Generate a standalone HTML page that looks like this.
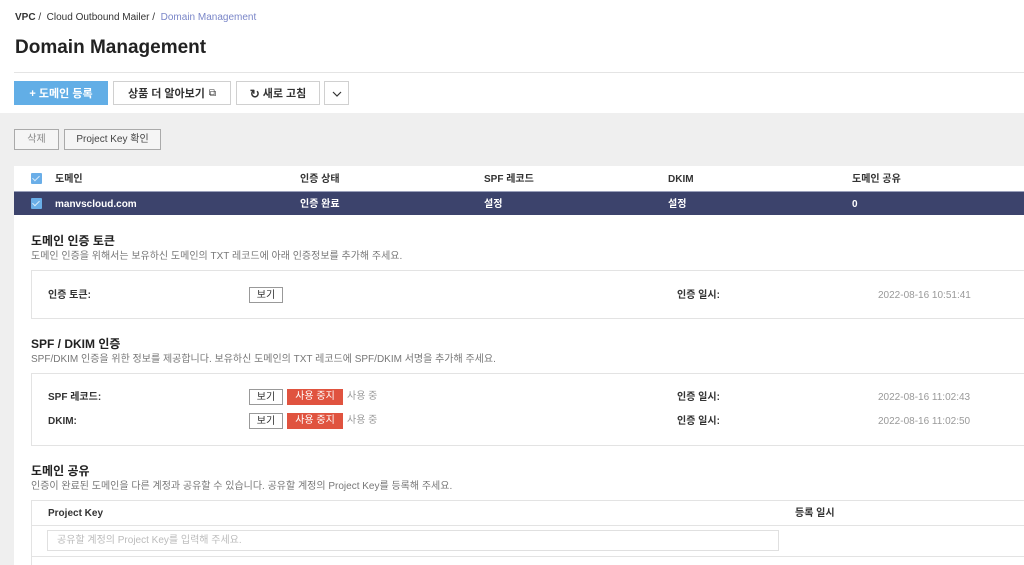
<!DOCTYPE html>
<html><head><meta charset="utf-8"><style>
*{box-sizing:border-box;margin:0;padding:0}
html,body{width:1024px;height:565px;overflow:hidden}
body{position:relative;background:#fff;font-family:"Liberation Sans","Noto Sans CJK KR",sans-serif;color:#222}
.a{position:absolute;white-space:nowrap;line-height:14px;margin-top:1px}
.btn{position:absolute;border:1px solid #d0d0d0;background:#fff;font-size:11px;font-weight:bold;color:#333;display:flex;align-items:center;justify-content:center;line-height:14px;padding-top:1px}
.sb,.rb{position:absolute;font-size:10px;height:16px;line-height:16px;text-align:center}
.sb{border:1px solid #999;background:#fff;color:#333;width:34px;line-height:15px}
.rb{background:#e0533f;color:#fff;width:56px}
.cb{position:absolute;width:11px;height:11px;background:#6aaee8;border-radius:1px}
.cb:after{content:"";position:absolute;left:3px;top:1px;width:3px;height:6px;border:solid #d6eafa;border-width:0 1px 1px 0;transform:rotate(45deg)}
.box{position:absolute;border:1px solid #e3e3e3;background:#fff}
.h{font-size:12px;font-weight:bold;color:#222}
.d{font-size:10px;color:#777}
.l{font-size:10px;font-weight:bold;color:#333}
.g{font-size:10px;color:#999}
</style></head><body>
<div class="a" style="left:15px;top:10px;font-size:10px;color:#333"><b>VPC</b> / &nbsp;Cloud Outbound Mailer / &nbsp;<span style="color:#7a86c8">Domain Management</span></div>
<div class="a" style="left:15px;top:36px;font-size:19px;line-height:22px;font-weight:bold;color:#222">Domain Management</div>
<div class="a" style="left:14px;top:71px;width:1010px;height:1px;background:#e4e4e4"></div>
<div class="btn" style="left:14px;top:81px;width:94px;height:24px;background:#62aee6;border-color:#62aee6;color:#fff">+ 도메인 등록</div>
<div class="btn" style="left:113px;top:81px;width:118px;height:24px">상품 더 알아보기 <span style="font-weight:normal;font-size:10px;margin-left:4px">⧉</span></div>
<div class="btn" style="left:236px;top:81px;width:84px;height:24px"><span style="font-size:12px;margin-right:3px">↻</span>새로 고침</div>
<div class="btn" style="left:324px;top:81px;width:25px;height:24px"><svg width="10" height="6"><path d="M1 1l4 4 4-4" fill="none" stroke="#333" stroke-width="1.2"/></svg></div>
<div class="a" style="left:0;top:113px;width:1024px;height:452px;background:#efefef;margin:0"></div>
<div class="btn" style="left:14px;top:129px;width:45px;height:21px;font-weight:normal;color:#888;background:#f5f5f5;border-color:#aaa;font-size:10px">삭제</div>
<div class="btn" style="left:64px;top:129px;width:97px;height:21px;font-weight:normal;color:#444;background:#f5f5f5;border-color:#aaa;font-size:10px">Project Key 확인</div>
<div class="a" style="left:14px;top:166px;width:1010px;height:399px;background:#fff;margin:0"></div>
<div class="cb" style="left:31px;top:173px"></div>
<div class="a l" style="left:55px;top:172px">도메인</div>
<div class="a l" style="left:300px;top:172px">인증 상태</div>
<div class="a l" style="left:484px;top:172px">SPF 레코드</div>
<div class="a l" style="left:668px;top:172px">DKIM</div>
<div class="a l" style="left:852px;top:172px">도메인 공유</div>
<div class="a" style="left:14px;top:191px;width:1010px;height:24px;background:#3c436c;border-top:1px solid #9aa0bb;margin:0"></div>
<div class="cb" style="left:31px;top:198px"></div>
<div class="a l" style="left:55px;top:197px;color:#fff">manvscloud.com</div>
<div class="a l" style="left:300px;top:197px;color:#fff">인증 완료</div>
<div class="a l" style="left:484px;top:197px;color:#fff">설정</div>
<div class="a l" style="left:668px;top:197px;color:#fff">설정</div>
<div class="a l" style="left:852px;top:197px;color:#fff">0</div>

<div class="a h" style="left:31px;top:233px">도메인 인증 토큰</div>
<div class="a d" style="left:31px;top:249px">도메인 인증을 위해서는 보유하신 도메인의 TXT 레코드에 아래 인증정보를 추가해 주세요.</div>
<div class="box" style="left:31px;top:270px;width:1000px;height:49px"></div>
<div class="a l" style="left:48px;top:288px">인증 토큰:</div>
<div class="sb" style="left:249px;top:287px">보기</div>
<div class="a l" style="left:677px;top:288px">인증 일시:</div>
<div class="a g" style="left:878px;top:288px">2022-08-16 10:51:41</div>

<div class="a h" style="left:31px;top:336px">SPF / DKIM 인증</div>
<div class="a d" style="left:31px;top:352px">SPF/DKIM 인증을 위한 정보를 제공합니다. 보유하신 도메인의 TXT 레코드에 SPF/DKIM 서명을 추가해 주세요.</div>
<div class="box" style="left:31px;top:373px;width:1000px;height:73px"></div>
<div class="a l" style="left:48px;top:390px">SPF 레코드:</div>
<div class="sb" style="left:249px;top:389px">보기</div>
<div class="rb" style="left:287px;top:389px">사용 중지</div>
<div class="a g" style="left:347px;top:389px">사용 중</div>
<div class="a l" style="left:677px;top:390px">인증 일시:</div>
<div class="a g" style="left:878px;top:390px">2022-08-16 11:02:43</div>
<div class="a l" style="left:48px;top:414px">DKIM:</div>
<div class="sb" style="left:249px;top:413px">보기</div>
<div class="rb" style="left:287px;top:413px">사용 중지</div>
<div class="a g" style="left:347px;top:413px">사용 중</div>
<div class="a l" style="left:677px;top:414px">인증 일시:</div>
<div class="a g" style="left:878px;top:414px">2022-08-16 11:02:50</div>

<div class="a h" style="left:31px;top:463px">도메인 공유</div>
<div class="a d" style="left:31px;top:479px">인증이 완료된 도메인을 다른 계정과 공유할 수 있습니다. 공유할 계정의 Project Key를 등록해 주세요.</div>
<div class="box" style="left:31px;top:500px;width:1000px;height:80px"></div>
<div class="a" style="left:31px;top:525px;width:993px;height:1px;background:#e3e3e3;margin:0"></div>
<div class="a" style="left:31px;top:556px;width:993px;height:1px;background:#e3e3e3;margin:0"></div>
<div class="a l" style="left:48px;top:506px">Project Key</div>
<div class="a l" style="left:795px;top:506px">등록 일시</div>
<div class="a" style="left:47px;top:530px;width:732px;height:21px;border:1px solid #e0e0e0;font-size:10px;color:#bbb;padding:3px 9px;margin:0">공유할 계정의 Project Key를 입력해 주세요.</div>
</body></html>
